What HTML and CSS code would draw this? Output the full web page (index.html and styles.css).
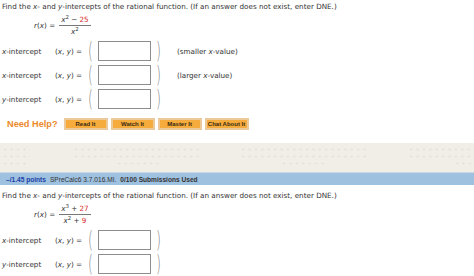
FILE: index.html
```html
<!DOCTYPE html>
<html lang="en">
<head>
    <meta charset="UTF-8">
    <title>Rational Function Intercepts</title>
    <link rel="stylesheet" href="styles.css">
</head>
<body>
    <div class="question">
        <p class="prompt">Find the <i>x</i>- and <i>y</i>-intercepts of the rational function. (If an answer does not exist, enter DNE.)</p>
        <div class="func">
            <span class="fname"><i>r</i>(<i>x</i>) =</span>
            <span class="frac">
                <span class="num"><i>x</i><sup>2</sup> &minus; <span class="red">25</span></span>
                <span class="den"><i>x</i><sup>2</sup></span>
            </span>
        </div>
        <div class="row">
            <span class="label"><i>x</i>-intercept</span>
            <span class="pair">(<i>x</i>, <i>y</i>) =</span>
            <span class="paren">(</span><span class="box"></span><span class="paren">)</span>
            <span class="note">(smaller <i>x</i>-value)</span>
        </div>
        <div class="row">
            <span class="label"><i>x</i>-intercept</span>
            <span class="pair">(<i>x</i>, <i>y</i>) =</span>
            <span class="paren">(</span><span class="box"></span><span class="paren">)</span>
            <span class="note">(larger <i>x</i>-value)</span>
        </div>
        <div class="row">
            <span class="label"><i>y</i>-intercept</span>
            <span class="pair">(<i>x</i>, <i>y</i>) =</span>
            <span class="paren">(</span><span class="box"></span><span class="paren">)</span>
        </div>
        <div class="help">
            <span class="help-title">Need Help?</span>
            <span class="btn">Read It</span>
            <span class="btn">Watch It</span>
            <span class="btn">Master It</span>
            <span class="btn">Chat About It</span>
        </div>
    </div>

    <!-- dotted separator between questions -->
    <div class="band">
        <div class="dots">
            <span style="width:28px"></span><span style="width:128px;margin-left:43px"></span><span style="width:128px;margin-left:40px"></span><span style="width:66px;margin-left:41px"></span>
        </div>
        <div class="dots">
            <span style="width:28px"></span><span style="width:128px;margin-left:43px"></span><span style="width:128px;margin-left:40px"></span><span style="width:66px;margin-left:41px"></span>
        </div>
        <div class="dots">
            <span style="width:28px"></span><span style="width:44px;margin-left:87px"></span><span style="width:44px;margin-left:122px"></span><span style="width:20px;margin-left:130px"></span>
        </div>
    </div>

    <div class="bar">
        <span class="pts">&ndash;/1.45 points</span>
        <span class="src">SPreCalc6 3.7.016.MI.</span>
        <span class="subs">0/100 Submissions Used</span>
    </div>

    <div class="question second">
        <p class="prompt">Find the <i>x</i>- and <i>y</i>-intercepts of the rational function. (If an answer does not exist, enter DNE.)</p>
        <div class="func">
            <span class="fname"><i>r</i>(<i>x</i>) =</span>
            <span class="frac">
                <span class="num"><i>x</i><sup>3</sup> + <span class="red">27</span></span>
                <span class="den"><i>x</i><sup>2</sup> + <span class="red">9</span></span>
            </span>
        </div>
        <div class="row">
            <span class="label"><i>x</i>-intercept</span>
            <span class="pair">(<i>x</i>, <i>y</i>) =</span>
            <span class="paren">(</span><span class="box"></span><span class="paren">)</span>
        </div>
        <div class="row">
            <span class="label"><i>y</i>-intercept</span>
            <span class="pair">(<i>x</i>, <i>y</i>) =</span>
            <span class="paren">(</span><span class="box"></span><span class="paren">)</span>
        </div>
    </div>
</body>
</html>
```

FILE: styles.css
```css
body {
    margin: 0;
    font-family: "DejaVu Sans", Verdana, sans-serif;
    font-size: 7.2px;
    color: #333;
    background-color: #fff;
}

.question {
    padding: 0 2px;
}

.prompt {
    margin: 0;
    padding-top: 2px;
    line-height: 9px;
}

.second .prompt {
    padding-top: 6px;
}

.func {
    display: flex;
    align-items: center;
    padding-left: 32px;
    height: 28px;
}

.fname {
    margin-right: 4px;
}

.frac {
    display: inline-flex;
    flex-direction: column;
    align-items: center;
    line-height: 9px;
}

.num {
    padding: 0 2px 1px;
    border-bottom: 1px solid #777;
}

.den {
    padding-top: 1px;
}

sup {
    font-size: 5.5px;
    line-height: 0;
}

.red {
    color: #d62728;
}

.row {
    display: flex;
    align-items: center;
    height: 24px;
}

.label {
    width: 53px;
}

.pair {
    width: 31px;
}

.paren {
    font-size: 23px;
    font-weight: 100;
    color: #888;
    line-height: 20px;
    transform: scaleX(0.55);
}

.box {
    width: 51px;
    height: 18px;
    margin: 0 3px;
    border: 1px solid #8d8d8d;
    background-color: #fff;
}

.note {
    margin-left: 14px;
}

.help {
    display: flex;
    align-items: center;
    height: 22px;
    margin-top: 2px;
    padding-left: 5px;
}

.help-title {
    font-family: "Liberation Sans", Arial, sans-serif;
    font-size: 9.2px;
    font-weight: bold;
    color: #ec8a2c;
    margin-right: 6px;
}

.btn {
    width: 40px;
    height: 8px;
    margin-right: 3px;
    border: 2px solid #ecc99a;
    background-color: #f6ac3c;
    font-family: "Liberation Sans", Arial, sans-serif;
    font-size: 6px;
    font-weight: bold;
    color: #3a2a10;
    text-align: center;
    line-height: 8px;
}

.band {
    margin-top: 8px;
    height: 29px;
    background-color: #f1eee8;
    padding-top: 3px;
    box-sizing: border-box;
}

.dots {
    display: flex;
    height: 7px;
    padding-left: 2px;
}

.dots span {
    height: 7px;
    background-image: radial-gradient(circle, #e2ddd4 0.8px, transparent 1.1px);
    background-size: 6.4px 7px;
}

.bar {
    height: 13px;
    background-color: #9fc1e0;
    border-top: 1px solid #c9d8e6;
    box-sizing: border-box;
    display: flex;
    align-items: center;
    padding-left: 6px;
    font-family: "Liberation Sans", Arial, sans-serif;
    font-size: 6.6px;
    color: #333;
}

.pts {
    color: #1b3fa6;
    font-weight: bold;
    margin-right: 4px;
}

.src {
    margin-right: 4px;
}

.subs {
    font-weight: bold;
}
```
